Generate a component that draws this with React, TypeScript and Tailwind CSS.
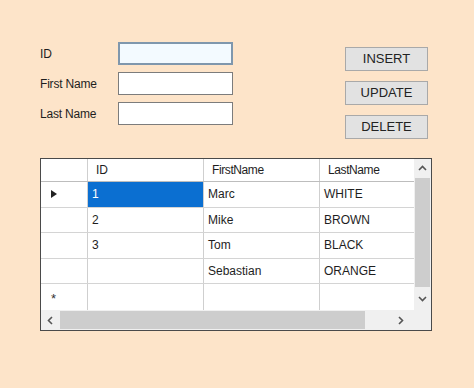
import React from "react";

const font = { fontFamily: '"Liberation Sans", Arial, sans-serif' };

function Chevron({ dir }: { dir: "up" | "down" | "left" | "right" }) {
  const pts: Record<string, string> = {
    up: "2,7 5.5,3.5 9,7",
    down: "2,4 5.5,7.5 9,4",
    left: "7,2 3.5,5.5 7,9",
    right: "4,2 7.5,5.5 4,9",
  };
  return (
    <svg width="11" height="11" viewBox="0 0 11 11">
      <polyline points={pts[dir]} fill="none" stroke="#555" strokeWidth="1.6" />
    </svg>
  );
}

const rows = [
  { id: "1", first: "Marc", last: "WHITE" },
  { id: "2", first: "Mike", last: "BROWN" },
  { id: "3", first: "Tom", last: "BLACK" },
  { id: "", first: "Sebastian", last: "ORANGE" },
];

export default function App() {
  return (
    <div
      className="w-[474px] h-[388px] bg-[#fde4c9] pl-[40px] pt-[42px] text-[12px] text-[#1e1e1e] overflow-hidden"
      style={font}
    >
      <div className="flex">
        <div className="flex flex-col gap-[7px]">
          {["ID", "First Name", "Last Name"].map((l, i) => (
            <div key={l} className="flex items-center h-[23px]">
              <div className="w-[78px] tracking-[-0.2px]">{l}</div>
              <div
                className={
                  i === 0
                    ? "w-[115px] h-[23px] border-2 border-[#7f97ad] bg-[#f3faff]"
                    : "w-[115px] h-[23px] border-[1.5px] border-[#7c7c7c] bg-white"
                }
              />
            </div>
          ))}
        </div>
        <div className="ml-[112px] mt-[5px] flex flex-col gap-[10px]">
          {["INSERT", "UPDATE", "DELETE"].map((b) => (
            <div
              key={b}
              className="w-[83px] h-[24px] bg-[#e2e2e2] border border-[#a9a9a9] flex items-center justify-center text-[13px] text-[#222]"
            >
              {b}
            </div>
          ))}
        </div>
      </div>

      <div className="mt-[19px] w-[392px] h-[173px] border-[1.5px] border-[#4a4a4a] bg-white flex flex-col">
        <div className="flex h-[151px]">
          <div className="flex-1 flex flex-col overflow-hidden">
            <div className="flex h-[23px] border-b border-[#bdbdbd] shrink-0">
              <div className="w-[47px] border-r border-[#cfcfcf]" />
              <div className="w-[116px] border-r border-[#cfcfcf] pl-[8px] flex items-center">ID</div>
              <div className="w-[116px] border-r border-[#cfcfcf] pl-[8px] flex items-center tracking-[-0.4px]">FirstName</div>
              <div className="flex-1 pl-[8px] flex items-center tracking-[-0.4px]">LastName</div>
            </div>
            {rows.map((r, i) => (
              <div key={i} className="flex h-[25.5px] border-b border-[#d4d4d4] shrink-0">
                <div className="w-[47px] border-r border-[#cfcfcf] flex items-center pl-[9px]">
                  {i === 0 && (
                    <svg width="8" height="10" viewBox="0 0 8 10">
                      <polygon points="1,1 7,5 1,9" fill="#222" />
                    </svg>
                  )}
                </div>
                <div
                  className={
                    i === 0
                      ? "w-[116px] border-r border-[#cfcfcf] pl-[4px] flex items-center bg-[#0b6fd1] text-white"
                      : "w-[116px] border-r border-[#cfcfcf] pl-[4px] flex items-center"
                  }
                >
                  {r.id}
                </div>
                <div className="w-[116px] border-r border-[#cfcfcf] pl-[4px] flex items-center">{r.first}</div>
                <div className="flex-1 pl-[4px] flex items-center">{r.last}</div>
              </div>
            ))}
            <div className="flex flex-1">
              <div className="w-[47px] border-r border-[#cfcfcf] flex items-center pl-[10px] pt-[4px] text-[13px] text-[#333]">*</div>
              <div className="w-[116px] border-r border-[#cfcfcf]" />
              <div className="w-[116px] border-r border-[#cfcfcf]" />
              <div className="flex-1" />
            </div>
          </div>
          <div className="w-[17px] bg-[#f0f0f0] flex flex-col">
            <div className="h-[19px] flex items-center justify-center">
              <Chevron dir="up" />
            </div>
            <div className="h-[109px] bg-[#cdcdcd] mx-[1px]" />
            <div className="flex-1 flex items-center justify-center">
              <Chevron dir="down" />
            </div>
          </div>
        </div>
        <div className="flex flex-1 bg-[#f0f0f0]">
          <div className="w-[19px] flex items-center justify-center">
            <Chevron dir="left" />
          </div>
          <div className="w-[305px] bg-[#cdcdcd] my-[1px]" />
          <div className="flex-1 flex items-center justify-end pr-[8px]">
            <Chevron dir="right" />
          </div>
          <div className="w-[17px] bg-[#f0f0f0]" />
        </div>
      </div>
    </div>
  );
}
